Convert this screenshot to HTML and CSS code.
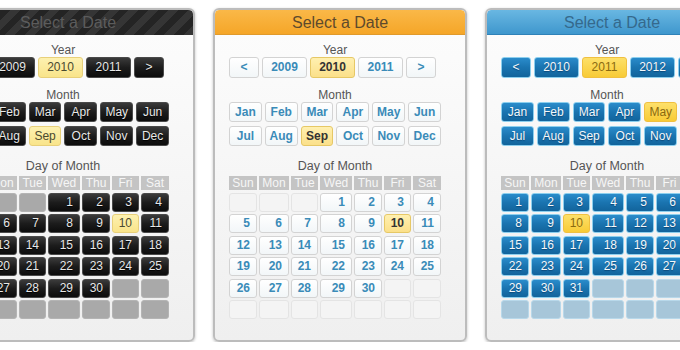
FILE: index.html
```html
<!DOCTYPE html>
<html lang="en">

<head>
    <meta charset="UTF-8">
    <title>Select a Date - themes</title>
    <link rel="stylesheet" href="styles.css">
</head>

<body>
    <div class="row">
        <!-- dark -->
        <div class="picker dark">
            <div class="head">Select a Date</div>
            <div class="body">
                <div class="label">Year</div>
                <div class="years">
                    <span class="btn arrow">&lt;</span>
                    <span class="btn yr">2009</span>
                    <span class="btn yr sel">2010</span>
                    <span class="btn yr">2011</span>
                    <span class="btn arrow">&gt;</span>
                </div>
                <div class="label lbl-month">Month</div>
                <div class="months">
                    <span class="btn">Jan</span><span class="btn">Feb</span><span class="btn">Mar</span>
                    <span class="btn">Apr</span><span class="btn">May</span><span class="btn">Jun</span>
                </div>
                <div class="months">
                    <span class="btn">Jul</span><span class="btn">Aug</span><span class="btn sel">Sep</span>
                    <span class="btn">Oct</span><span class="btn">Nov</span><span class="btn">Dec</span>
                </div>
                <div class="label lbl-day">Day of Month</div>
                <div class="days">
                    <span class="dow">Sun</span><span class="dow">Mon</span><span class="dow">Tue</span><span class="dow">Wed</span><span class="dow">Thu</span><span class="dow">Fri</span><span class="dow">Sat</span>
                    <span class="day empty"></span><span class="day empty"></span><span class="day empty"></span><span class="day">1</span><span class="day">2</span><span class="day">3</span><span class="day">4</span>
                    <span class="day">5</span><span class="day">6</span><span class="day">7</span><span class="day">8</span><span class="day">9</span><span class="day sel">10</span><span class="day">11</span>
                    <span class="day">12</span><span class="day">13</span><span class="day">14</span><span class="day">15</span><span class="day">16</span><span class="day">17</span><span class="day">18</span>
                    <span class="day">19</span><span class="day">20</span><span class="day">21</span><span class="day">22</span><span class="day">23</span><span class="day">24</span><span class="day">25</span>
                    <span class="day">26</span><span class="day">27</span><span class="day">28</span><span class="day">29</span><span class="day">30</span><span class="day empty"></span><span class="day empty"></span>
                    <span class="day empty"></span><span class="day empty"></span><span class="day empty"></span><span class="day empty"></span><span class="day empty"></span><span class="day empty"></span><span class="day empty"></span>
                </div>
            </div>
        </div>

        <!-- light / orange -->
        <div class="picker light">
            <div class="head">Select a Date</div>
            <div class="body">
                <div class="label">Year</div>
                <div class="years">
                    <span class="btn arrow">&lt;</span>
                    <span class="btn yr">2009</span>
                    <span class="btn yr sel">2010</span>
                    <span class="btn yr">2011</span>
                    <span class="btn arrow">&gt;</span>
                </div>
                <div class="label lbl-month">Month</div>
                <div class="months">
                    <span class="btn">Jan</span><span class="btn">Feb</span><span class="btn">Mar</span>
                    <span class="btn">Apr</span><span class="btn">May</span><span class="btn">Jun</span>
                </div>
                <div class="months">
                    <span class="btn">Jul</span><span class="btn">Aug</span><span class="btn sel">Sep</span>
                    <span class="btn">Oct</span><span class="btn">Nov</span><span class="btn">Dec</span>
                </div>
                <div class="label lbl-day">Day of Month</div>
                <div class="days">
                    <span class="dow">Sun</span><span class="dow">Mon</span><span class="dow">Tue</span><span class="dow">Wed</span><span class="dow">Thu</span><span class="dow">Fri</span><span class="dow">Sat</span>
                    <span class="day empty"></span><span class="day empty"></span><span class="day empty"></span><span class="day">1</span><span class="day">2</span><span class="day">3</span><span class="day">4</span>
                    <span class="day">5</span><span class="day">6</span><span class="day">7</span><span class="day">8</span><span class="day">9</span><span class="day sel">10</span><span class="day">11</span>
                    <span class="day">12</span><span class="day">13</span><span class="day">14</span><span class="day">15</span><span class="day">16</span><span class="day">17</span><span class="day">18</span>
                    <span class="day">19</span><span class="day">20</span><span class="day">21</span><span class="day">22</span><span class="day">23</span><span class="day">24</span><span class="day">25</span>
                    <span class="day">26</span><span class="day">27</span><span class="day">28</span><span class="day">29</span><span class="day">30</span><span class="day empty"></span><span class="day empty"></span>
                    <span class="day empty"></span><span class="day empty"></span><span class="day empty"></span><span class="day empty"></span><span class="day empty"></span><span class="day empty"></span><span class="day empty"></span>
                </div>
            </div>
        </div>

        <!-- blue -->
        <div class="picker blue">
            <div class="head">Select a Date</div>
            <div class="body">
                <div class="label">Year</div>
                <div class="years">
                    <span class="btn arrow">&lt;</span>
                    <span class="btn yr">2010</span>
                    <span class="btn yr sel">2011</span>
                    <span class="btn yr">2012</span>
                    <span class="btn arrow">&gt;</span>
                </div>
                <div class="label lbl-month">Month</div>
                <div class="months">
                    <span class="btn">Jan</span><span class="btn">Feb</span><span class="btn">Mar</span>
                    <span class="btn">Apr</span><span class="btn sel">May</span><span class="btn">Jun</span>
                </div>
                <div class="months">
                    <span class="btn">Jul</span><span class="btn">Aug</span><span class="btn">Sep</span>
                    <span class="btn">Oct</span><span class="btn">Nov</span><span class="btn">Dec</span>
                </div>
                <div class="label lbl-day">Day of Month</div>
                <div class="days">
                    <span class="dow">Sun</span><span class="dow">Mon</span><span class="dow">Tue</span><span class="dow">Wed</span><span class="dow">Thu</span><span class="dow">Fri</span><span class="dow">Sat</span>
                    <span class="day">1</span><span class="day">2</span><span class="day">3</span><span class="day">4</span><span class="day">5</span><span class="day">6</span><span class="day">7</span>
                    <span class="day">8</span><span class="day">9</span><span class="day sel">10</span><span class="day">11</span><span class="day">12</span><span class="day">13</span><span class="day">14</span>
                    <span class="day">15</span><span class="day">16</span><span class="day">17</span><span class="day">18</span><span class="day">19</span><span class="day">20</span><span class="day">21</span>
                    <span class="day">22</span><span class="day">23</span><span class="day">24</span><span class="day">25</span><span class="day">26</span><span class="day">27</span><span class="day">28</span>
                    <span class="day">29</span><span class="day">30</span><span class="day">31</span><span class="day empty"></span><span class="day empty"></span><span class="day empty"></span><span class="day empty"></span>
                    <span class="day empty"></span><span class="day empty"></span><span class="day empty"></span><span class="day empty"></span><span class="day empty"></span><span class="day empty"></span><span class="day empty"></span>
                </div>
            </div>
        </div>
    </div>
</body>

</html>
```

FILE: styles.css
```css
* {
    margin: 0;
    padding: 0;
    box-sizing: border-box;
}

body {
    background: #fff;
    font-family: "Liberation Sans", Arial, sans-serif;
    overflow: hidden;
}

.row {
    display: flex;
    gap: 18px;
    margin-left: -59px;
    padding-top: 8px;
}

.picker {
    flex: 0 0 254px;
    height: 334px;
    border: 2px solid #bcbcbc;
    border-radius: 6px;
    background: linear-gradient(#fdfdfd, #efefef);
    box-shadow: 0 1px 3px rgba(0, 0, 0, 0.25);
    overflow: hidden;
}

.head {
    height: 25px;
    line-height: 25px;
    text-align: center;
    font-size: 16px;
    border-radius: 4px 4px 0 0;
}

.body {
    padding: 0 24px 0 14px;
}

.label {
    margin-top: 8px;
    height: 14px;
    line-height: 14px;
    text-align: center;
    font-size: 12px;
    color: #555;
}

.lbl-month {
    margin-top: 10px;
}

.lbl-day {
    margin-top: 13px;
    margin-bottom: 3px;
    font-size: 12.5px;
}

.btn {
    display: block;
    height: 20px;
    line-height: 18px;
    text-align: center;
    font-size: 12px;
    border: 1px solid;
    border-radius: 3px;
}

.years {
    display: flex;
    gap: 3px;
}

.years .btn {
    height: 21px;
    line-height: 19px;
}

.years .arrow {
    width: 30px;
}

.years .yr {
    width: 45px;
}

.months {
    display: flex;
    gap: 3px;
    margin-bottom: 4px;
}

.months .btn {
    flex: 1;
}

.days {
    display: grid;
    grid-template-columns: 28px 30px 27px 32px 28px 27px 28px;
    grid-template-rows: 14px;
    grid-auto-rows: 19px;
    column-gap: 2px;
    row-gap: 2.5px;
}

.dow {
    background: #c4c4c4;
    color: #f6f6f6;
    font-size: 12px;
    line-height: 14px;
    text-align: center;
}

.day {
    border: 1px solid;
    border-radius: 3px;
    font-size: 12px;
    line-height: 17px;
    text-align: right;
    padding-right: 6px;
}

/* dark theme */
.dark .head {
    background: repeating-linear-gradient(-45deg, #353535 0 7px, #242424 7px 14px);
    color: #5c5c5c;
}

.dark .btn,
.dark .day {
    background: linear-gradient(#3a3a3a, #1c1c1c 50%, #0c0c0c);
    border-color: #4a4a4a;
    color: #e8e8e8;
    text-shadow: 0 1px 1px #000;
}

.dark .day.empty {
    background: #a9a9a9;
    border-color: #b4b4b4;
}

.dark .btn.sel,
.dark .day.sel {
    background: linear-gradient(#fdf1b0, #f9e48a);
    border-color: #e8d07a;
    color: #4a4a30;
    text-shadow: none;
}

/* light theme */
.light .head {
    background: linear-gradient(#fab848, #f5a628);
    border-bottom: 1px solid #e09a2c;
    color: #5e4a2c;
}

.light .btn,
.light .day {
    background: linear-gradient(#ffffff, #f2f6f8);
    border-color: #d3d3d3;
    color: #3a8bb8;
    font-weight: bold;
}

.light .day.empty {
    background: #f4f4f4;
    border-color: #e4e4e4;
}

.light .btn.sel,
.light .day.sel {
    background: linear-gradient(#fff0b0, #fbe08a);
    border-color: #e6c866;
    color: #333;
}

/* blue theme */
.blue .head {
    background: linear-gradient(#69b7e2, #3f97cd);
    border-bottom: 1px solid #2f82b8;
    color: #35698c;
}

.blue .btn,
.blue .day {
    background: linear-gradient(#2a8ccb, #1a74b0 50%, #12649c);
    border-color: #8ccfee;
    color: #f4f8fb;
    text-shadow: 0 1px 1px rgba(0, 40, 80, 0.5);
}

.blue .day.empty {
    background: #a7c6d9;
    border-color: #b8d8ea;
}

.blue .btn.sel,
.blue .day.sel {
    background: linear-gradient(#fde06a, #f8cb36);
    border-color: #f0c040;
    color: #8a6a10;
    text-shadow: none;
}
```
